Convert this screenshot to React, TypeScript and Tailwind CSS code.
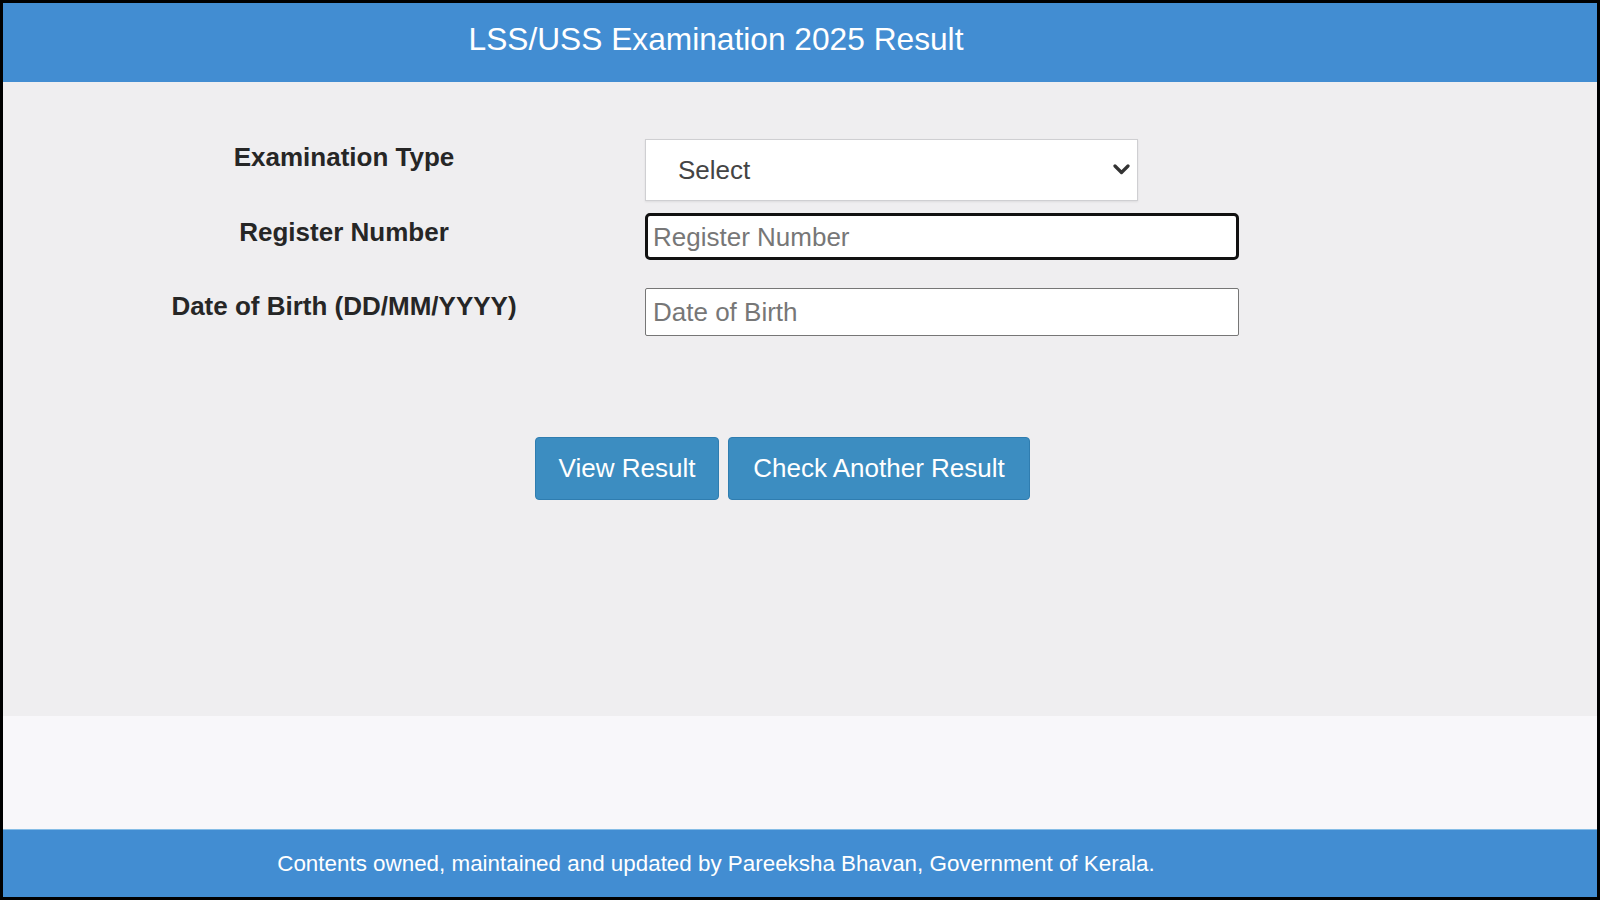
import { useState } from 'react'

const examTypes = ['LSS', 'USS']

export default function App() {
  const [examType, setExamType] = useState('')
  const [registerNo, setRegisterNo] = useState('')
  const [dob, setDob] = useState('')

  return (
    <div className="h-[900px] w-[1600px] border-[3px] border-black bg-[#f8f7fa] font-['Liberation_Sans',Arial,sans-serif] flex flex-col">
      <header className="h-[79px] shrink-0 bg-[#428dd2] pt-[18px] pr-[168px] text-center">
        <h1 className="text-[31.7px] leading-[37px] text-white">LSS/USS Examination 2025 Result</h1>
      </header>

      <main className="h-[634px] shrink-0 bg-[#efeef0] pt-[57px]">
        <div className="flex items-start">
          <label className="mt-[3px] w-[642px] pl-[40px] text-center text-[26px] font-bold leading-[30px] text-[#262626]">
            Examination Type
          </label>
          <div className="relative h-[62px] w-[493px]">
            <select
              value={examType}
              onChange={(e) => setExamType(e.target.value)}
              className="h-full w-full appearance-none border border-[#cfcfd2] bg-white pl-[32px] text-[26px] text-[#444] shadow-[0_1px_2px_rgba(0,0,0,0.08)] outline-none"
            >
              <option value="">Select</option>
              {examTypes.map((type) => (
                <option key={type} value={type}>
                  {type}
                </option>
              ))}
            </select>
            <svg
              className="pointer-events-none absolute right-[8px] top-[25px]"
              width="17"
              height="11"
              viewBox="0 0 17 11"
              fill="none"
            >
              <path d="M2 2l6.5 6.5L15 2" stroke="#333" strokeWidth="3.2" strokeLinecap="round" strokeLinejoin="round" />
            </svg>
          </div>
        </div>

        <div className="mt-[12px] flex items-start">
          <label className="mt-[4px] w-[642px] pl-[40px] text-center text-[26px] font-bold leading-[30px] text-[#262626]">
            Register Number
          </label>
          <input
            value={registerNo}
            onChange={(e) => setRegisterNo(e.target.value)}
            placeholder="Register Number"
            className="h-[47px] w-[594px] rounded-[5px] border-[3px] border-[#111] bg-white px-[5px] pt-[2px] text-[26px] text-[#222] outline-none placeholder:text-[#777]"
          />
        </div>

        <div className="mt-[28px] flex items-start">
          <label className="mt-[3px] w-[642px] pl-[40px] text-center text-[26px] font-bold leading-[30px] text-[#262626]">
            Date of Birth (DD/MM/YYYY)
          </label>
          <input
            value={dob}
            onChange={(e) => setDob(e.target.value)}
            placeholder="Date of Birth"
            className="h-[48px] w-[594px] rounded-[2px] border border-[#767676] bg-white px-[7px] text-[26px] text-[#222] outline-none placeholder:text-[#777]"
          />
        </div>

        <div className="mt-[101px] flex gap-[9px] pl-[532px]">
          <button className="h-[63px] w-[184px] rounded-[4px] border border-[#2f7db0] bg-[#3c8dc1] text-[26px] text-white">
            View Result
          </button>
          <button
            onClick={() => {
              setExamType('')
              setRegisterNo('')
              setDob('')
            }}
            className="h-[63px] w-[302px] rounded-[4px] border border-[#2f7db0] bg-[#3c8dc1] text-[26px] text-white"
          >
            Check Another Result
          </button>
        </div>
      </main>

      <div className="h-[113px] shrink-0" />

      <footer className="flex h-[68px] shrink-0 items-center justify-center border-t border-[#86bde6] bg-[#428dd2] pr-[168px]">
        <p className="text-[22.4px] text-white">
          Contents owned, maintained and updated by Pareeksha Bhavan, Government of Kerala.
        </p>
      </footer>
    </div>
  )
}
